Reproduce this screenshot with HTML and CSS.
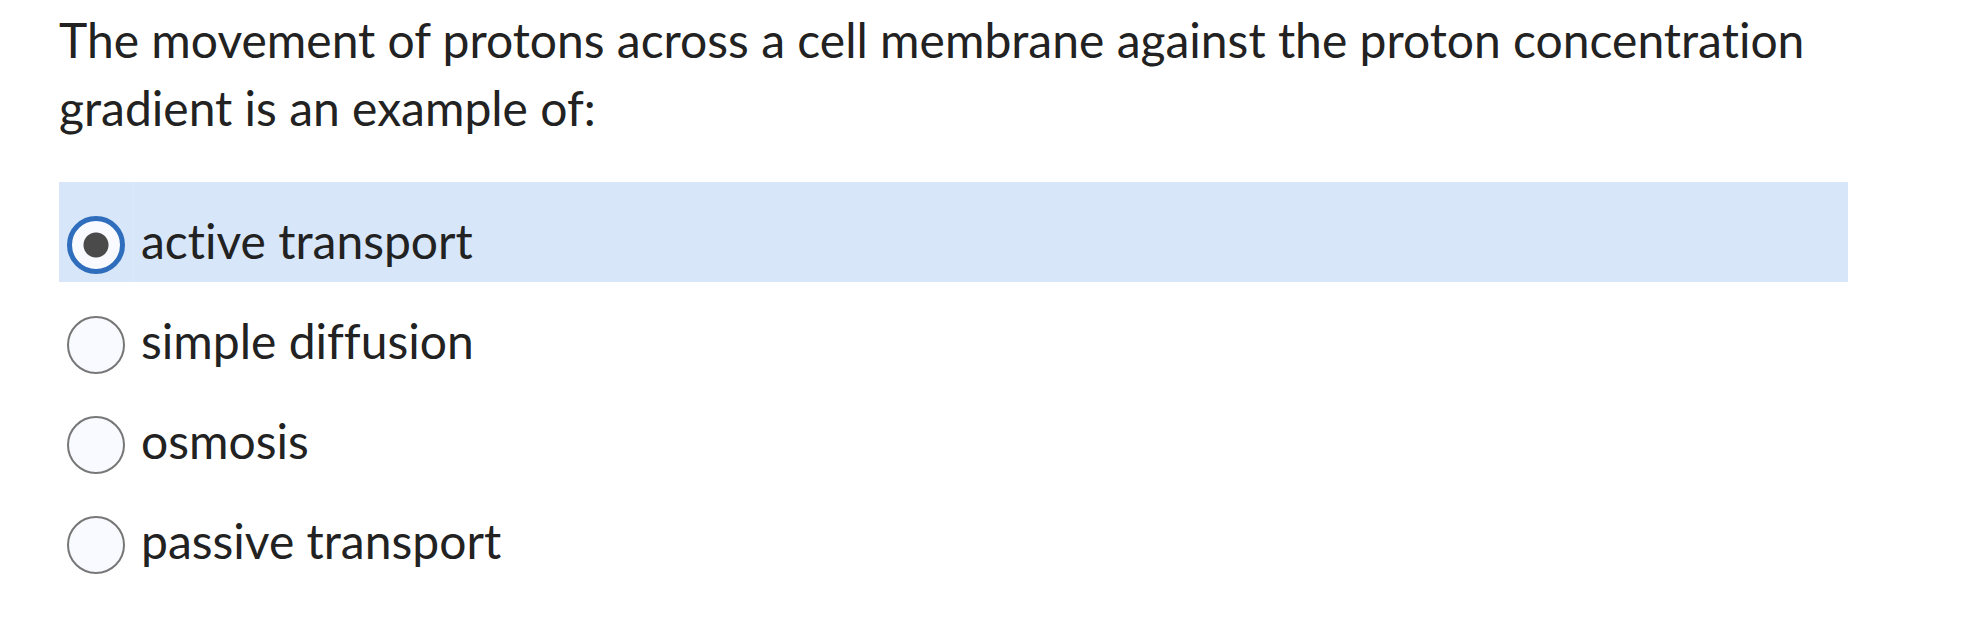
FILE: index.html
```html
<!DOCTYPE html>
<html lang="en">

<head>
    <meta charset="UTF-8">
    <meta name="viewport" content="width=device-width, initial-scale=1.0">
    <title>Quiz - Question 1</title>
    <link rel="stylesheet" href="styles.css">
</head>

<body>
    <div class="question">
        <p class="question-text">The movement of protons across a cell membrane against the proton concentration gradient is an example of:</p>

        <!-- lista de respostas, a marcada fica destacada -->
        <div class="answers">
            <label class="answer selected">
                <span class="answer-radio"><input type="radio" name="q1" checked></span>
                <span class="answer-text">active transport</span>
            </label>
            <label class="answer">
                <span class="answer-radio"><input type="radio" name="q1"></span>
                <span class="answer-text">simple diffusion</span>
            </label>
            <label class="answer">
                <span class="answer-radio"><input type="radio" name="q1"></span>
                <span class="answer-text">osmosis</span>
            </label>
            <label class="answer">
                <span class="answer-radio"><input type="radio" name="q1"></span>
                <span class="answer-text">passive transport</span>
            </label>
        </div>
    </div>
</body>

</html>
```

FILE: styles.css
```css
/* pergunta e respostas */
body {
    margin: 0;
    background: #ffffff;
    color: #222222;
    font-family: Lato, 'Open Sans', sans-serif;
    font-size: 48px;
    font-variant-ligatures: none;
}

.question {
    width: 1789px;
    padding: 6px 0 0 59px;
}

.question-text {
    margin: 0 0 40px 0;
    line-height: 68px;
}

.answers {
    display: flex;
    flex-direction: column;
}

.answer {
    display: flex;
    align-items: flex-start;
    height: 100px;
    box-sizing: border-box;
    padding: 0 0 0 8px;
    cursor: pointer;
}

.answer.selected {
    background: #d7e6f8;
}

.answer-radio {
    width: 58px;
    padding-right: 8px;
    margin-top: 34px;
}

.answer-radio input {
    appearance: none;
    -webkit-appearance: none;
    display: block;
    margin: 0;
    width: 58px;
    height: 58px;
    border-radius: 50%;
    border: 2px solid #777777;
    background: #f8faff;
    box-sizing: border-box;
}

.answer-radio input:checked {
    border: 5px solid #2f6dbd;
    background: radial-gradient(circle, #4a4a4a 0, #4a4a4a 12px, #f8faff 13px);
}

.answer-text {
    height: 100px;
    box-sizing: border-box;
    padding: 25px 0 0 7px;
    line-height: 68px;
    border-left: 1px solid transparent;
}

.answer.selected .answer-text {
    border-left-color: #dce9f9;
}
```
